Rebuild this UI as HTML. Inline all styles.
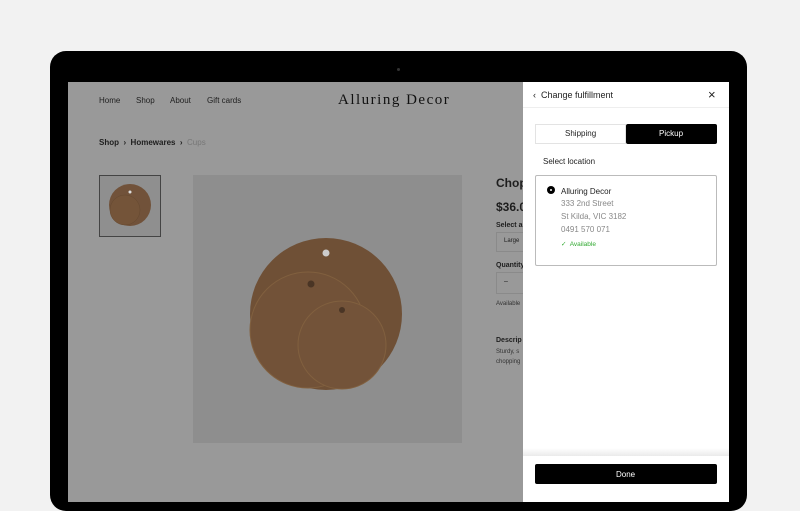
<!DOCTYPE html>
<html><head><style>
*{margin:0;padding:0;box-sizing:border-box}
body{width:800px;height:489px;background:#f2f2f2;position:relative;overflow:hidden;font-family:"Liberation Sans",sans-serif}
.lap{position:absolute;left:50px;top:51px;width:697px;height:460px;background:#000;border-radius:16px}
.cam{position:absolute;left:397px;top:68px;width:3px;height:3px;border-radius:50%;background:#333}
.scr{position:absolute;left:68px;top:82px;width:661px;height:420px;background:#999;overflow:hidden}
.t{position:absolute;font-size:8px;color:#1e1e1e;white-space:nowrap}
.panel{position:absolute;left:523px;top:82px;width:206px;height:420px;background:#fff}
.p{position:absolute;white-space:nowrap;font-size:8px;color:#222}
</style></head><body>
<div class="lap"></div><div class="cam"></div>
<div class="scr">
<div class="t" style="left:31px;top:14px">Home</div>
<div class="t" style="left:68px;top:14px">Shop</div>
<div class="t" style="left:102px;top:14px">About</div>
<div class="t" style="left:139px;top:14px">Gift cards</div>
<div class="t" style="left:270px;top:10px;font-family:'Liberation Serif',serif;font-size:15px;letter-spacing:1.5px;color:#111">Alluring Decor</div>
<div class="t" style="left:31px;top:56px;font-weight:bold">Shop &nbsp;›&nbsp; Homewares &nbsp;›&nbsp; <span style="color:#777;font-weight:normal">Cups</span></div>
<div style="position:absolute;left:31px;top:93px;width:62px;height:62px;border:1px solid #444;background:#8f8f8f">
<svg width="60" height="60"><circle cx="30" cy="29" r="21" fill="#71523a"/><circle cx="25" cy="34" r="15" fill="#745439" stroke="#65482f" stroke-width=".5"/><circle cx="30" cy="16" r="1.5" fill="#ddd"/></svg></div>
<div style="position:absolute;left:125px;top:93px;width:269px;height:268px;background:#8e8e8e">
<svg width="269" height="268" style="position:absolute;left:0;top:0">
<circle cx="133" cy="139" r="76" fill="#6f5036"/>
<circle cx="115" cy="155" r="58" fill="#725238" stroke="#81603f" stroke-width="1"/>
<circle cx="149" cy="170" r="44" fill="#735339" stroke="#81603f" stroke-width="1"/>
<circle cx="133" cy="78" r="3.5" fill="#ccc"/>
<circle cx="118" cy="109" r="3.5" fill="#4a3525"/>
<circle cx="149" cy="135" r="3" fill="#4a3525"/>
</svg></div>
<div class="t" style="left:428px;top:94px;font-size:12px;font-weight:bold">Chop</div>
<div class="t" style="left:428px;top:118px;font-size:12px;font-weight:bold">$36.0</div>
<div class="t" style="left:428px;top:140px;font-size:7px;font-weight:bold">Select a</div>
<div style="position:absolute;left:428px;top:150px;width:30px;height:20px;border:1px solid #8a8a8a"></div>
<div class="t" style="left:436px;top:156px;font-size:6px">Large</div>
<div class="t" style="left:428px;top:180px;font-size:7px;font-weight:bold">Quantity</div>
<div style="position:absolute;left:428px;top:190px;width:30px;height:22px;border:1px solid #8a8a8a"></div>
<div class="t" style="left:436px;top:196px;font-size:7px">–</div>
<div class="t" style="left:428px;top:219px;font-size:6px;color:#333">Available</div>
<div class="t" style="left:428px;top:255px;font-size:7px;font-weight:bold">Descrip</div>
<div class="t" style="left:428px;top:267px;font-size:6px;color:#333">Sturdy, s</div>
<div class="t" style="left:428px;top:277px;font-size:6px;color:#333">chopping</div>
</div>
<div class="panel">
<div class="p" style="left:10px;top:8px;font-size:9px">‹&nbsp; Change fulfillment</div>
<div class="p" style="left:185px;top:5px;font-size:13px">×</div>
<div style="position:absolute;left:0;top:25px;width:206px;height:1px;background:#eee"></div>
<div style="position:absolute;left:12px;top:42px;width:91px;height:20px;border:1px solid #e3e3e3"></div>
<div class="p" style="left:42px;top:47px">Shipping</div>
<div style="position:absolute;left:103px;top:42px;width:91px;height:20px;background:#000;border-radius:2px"></div>
<div class="p" style="left:136px;top:47px;color:#fff">Pickup</div>
<div class="p" style="left:20px;top:75px">Select location</div>
<div style="position:absolute;left:12px;top:93px;width:182px;height:91px;border:1px solid #bbb;border-radius:2px"></div>
<div style="position:absolute;left:24px;top:104px;width:8px;height:8px;border-radius:50%;background:#000"><div style="position:absolute;left:3px;top:3px;width:2px;height:2px;background:#fff;border-radius:50%"></div></div>
<div class="p" style="left:38px;top:105px">Alluring Decor</div>
<div class="p" style="left:38px;top:117px;color:#888">333 2nd Street</div>
<div class="p" style="left:38px;top:130px;color:#888">St Kilda, VIC 3182</div>
<div class="p" style="left:38px;top:143px;color:#888">0491 570 071</div>
<div class="p" style="left:38px;top:158px;font-size:6.5px;color:#3a3">✓&nbsp; Available</div>
<div style="position:absolute;left:0;top:366px;width:206px;height:8px;background:linear-gradient(#fff,#eaeaea)"></div>
<div style="position:absolute;left:12px;top:382px;width:182px;height:20px;background:#000;border-radius:2px"></div>
<div class="p" style="left:93px;top:388px;color:#fff">Done</div>
</div>
</body></html>
